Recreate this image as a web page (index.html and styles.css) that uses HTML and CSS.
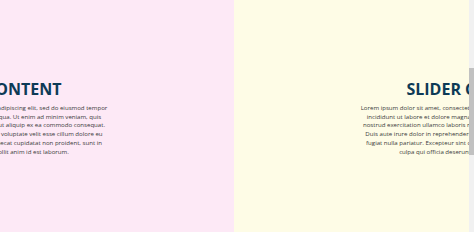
FILE: index.html
```html
<!DOCTYPE html>
<html>
<head>
<meta charset="utf-8">
<link rel="stylesheet" href="styles.css">
</head>
<body>
<div class="page">
  <div class="viewport">
    <div class="track">
      <section class="slide slide-pink">
        <h2 class="slide-title">SLIDER CONTENT</h2>
        <p class="slide-text">Lorem ipsum dolor sit amet, consectetur adipiscing elit, sed do eiusmod tempor<br>incididunt ut labore et dolore magna aliqua. Ut enim ad minim veniam, quis<br>nostrud exercitation ullamco laboris nisi ut aliquip ex ea commodo consequat.<br>Duis aute irure dolor in reprehenderit in voluptate velit esse cillum dolore eu<br>fugiat nulla pariatur. Excepteur sint occaecat cupidatat non proident, sunt in<br>culpa qui officia deserunt mollit anim id est laborum.</p>
      </section>
      <section class="slide slide-yellow">
        <h2 class="slide-title">SLIDER CONTENT</h2>
        <p class="slide-text">Lorem ipsum dolor sit amet, consectetur adipiscing elit, sed do eiusmod tempor<br>incididunt ut labore et dolore magna aliqua. Ut enim ad minim veniam, quis<br>nostrud exercitation ullamco laboris nisi ut aliquip ex ea commodo consequat.<br>Duis aute irure dolor in reprehenderit in voluptate velit esse cillum dolore eu<br>fugiat nulla pariatur. Excepteur sint occaecat cupidatat non proident, sunt in<br>culpa qui officia deserunt mollit anim id est laborum.</p>
      </section>
    </div>
  </div>
  <div class="scrollbar"><div class="scrollbar-thumb"></div></div>
</div>
</body>
</html>
```

FILE: styles.css
```css
html, body {
  margin: 0;
  padding: 0;
  height: 100%;
  overflow: hidden;
}
body {
  font-family: "Open Sans", "Noto Sans", sans-serif;
}
.page {
  display: flex;
  height: 232px;
}
.viewport {
  flex: 1;
  overflow: hidden;
}
.track {
  display: flex;
  height: 100%;
  transform: translateX(-246px);
}
.slide {
  flex: 0 0 480px;
  display: flex;
  flex-direction: column;
  align-items: center;
  padding-top: 78px;
  box-sizing: border-box;
  text-align: center;
}
.slide-pink { background: #fde9f6; }
.slide-yellow { background: #fefce6; }
.slide-title {
  margin: 0;
  font-size: 16px;
  line-height: 22px;
  font-weight: 700;
  color: #0d3a56;
}
.slide-text {
  margin: 4px 0 0;
  font-size: 6.1px;
  line-height: 8.7px;
  color: #3a3a3a;
  white-space: nowrap;
}
.scrollbar {
  width: 5px;
  background: #f1f1f1;
  display: flex;
  flex-direction: column;
}
.scrollbar-thumb {
  margin-top: 68px;
  height: 87px;
  background: #c1c1c1;
}
```
